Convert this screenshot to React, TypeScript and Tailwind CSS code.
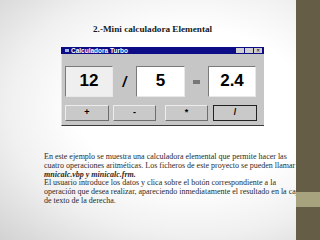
import React from "react";

const serif = { fontFamily: '"Liberation Serif", "Times New Roman", serif' };
const sans = { fontFamily: '"Liberation Sans", Arial, sans-serif' };

function Box({ value, shade }: { value: string; shade?: boolean }) {
  return (
    <div
      className={`h-[31px] flex justify-center pt-[3px] text-[17px] leading-[22px] font-semibold text-black border border-t-[#7a7a7a] border-l-[#7a7a7a] border-r-[#e8e8e8] border-b-[#e8e8e8] ${
        shade ? "bg-[#efefef]" : "bg-white"
      }`}
    >
      {value}
    </div>
  );
}

function Btn({ label, focused, w }: { label: string; focused?: boolean; w: string }) {
  return (
    <div
      className={`${w} h-[16px] flex items-center justify-center text-[9px] font-bold text-black bg-[#c9c9c9] border ${
        focused
          ? "border-[#222]"
          : "border-t-[#ececec] border-l-[#ececec] border-r-[#6e6e6e] border-b-[#6e6e6e]"
      }`}
    >
      {label}
    </div>
  );
}

export default function App() {
  return (
    <div
      className="w-[320px] h-[240px] flex overflow-hidden bg-[radial-gradient(ellipse_at_60%_45%,#ffffff_42%,#f0f0f0_68%,#d2d2d2_100%)]"
      style={serif}
    >
      {/* slide body */}
      <div className="w-[296px] shrink-0 flex flex-col">
        <div className="mt-[23px] h-[12px] pl-[93px] text-[9.2px] leading-[12px] font-bold text-[#1a1a1a] whitespace-nowrap">
          2.-Mini calculadora Elemental
        </div>

        {/* VB window */}
        <div className="mt-[12px] ml-[61px] w-[203px] flex flex-col" style={sans}>
          <div className="h-[7px] bg-[#0c0c86] flex items-center pl-[4px] pr-[2px]">
            <div className="w-[4px] h-[3px] bg-[#9fb6e8] mr-[2px]" />
            <span className="text-[6.5px] leading-[7px] font-bold text-white">Calculadora Turbo</span>
            <div className="ml-auto flex gap-px">
              <div className="w-[8px] h-[5px] bg-[#cfcfcf]" />
              <div className="w-[8px] h-[5px] bg-[#cfcfcf]" />
              <div className="w-[8px] h-[5px] bg-[#cfcfcf] flex items-center justify-center text-[5px] leading-none text-black">
                ✕
              </div>
            </div>
          </div>
          <div className="h-[72px] bg-[#c6c6c6] border-l border-l-[#e4e4e4] border-b border-b-[#3a3a3a] pl-[3px] pt-[12px]">
            <div className="flex">
              <div className="w-[48px]">
                <Box value="12" shade />
              </div>
              <div className="w-[23px] flex justify-center pt-[8px] text-[14px] leading-[16px] font-bold italic text-black">
                /
              </div>
              <div className="w-[49px]">
                <Box value="5" />
              </div>
              <div className="w-[23px] flex justify-center pt-[14px]">
                <div className="w-[7px] h-[4px] bg-[#777]" />
              </div>
              <div className="w-[48px]">
                <Box value="2.4" />
              </div>
            </div>
            <div className="flex mt-[8px]">
              <Btn label="+" w="w-[44px]" />
              <div className="w-[4px]" />
              <Btn label="-" w="w-[43px]" />
              <div className="w-[9px]" />
              <Btn label="*" w="w-[43px]" />
              <div className="w-[5px]" />
              <Btn label="/" focused w="w-[44px]" />
            </div>
          </div>
        </div>

        <div className="mt-[27px] ml-[44px] text-[8px] leading-[8.8px] text-[#2a2a2a] whitespace-nowrap">
          <div>En este ejemplo se muestra una calculadora elemental que permite hacer las</div>
          <div>cuatro operaciones aritméticas. Los ficheros de este proyecto se pueden llamar</div>
          <div className="font-bold italic">mnicalc.vbp y minicalc.frm.</div>
          <div>El usuario introduce los datos y clica sobre el botón correspondiente a la</div>
          <div>operación que desea realizar, apareciendo inmediatamente el resultado en la caja</div>
          <div>de texto de la derecha.</div>
        </div>
      </div>

      {/* side bar */}
      <div className="w-[24px] shrink-0 flex flex-col">
        <div className="h-[192px] bg-[#665d47]" />
        <div className="h-[15px] bg-[#a8a37f]" />
        <div className="flex-1 bg-[#665d47]" />
      </div>
    </div>
  );
}
